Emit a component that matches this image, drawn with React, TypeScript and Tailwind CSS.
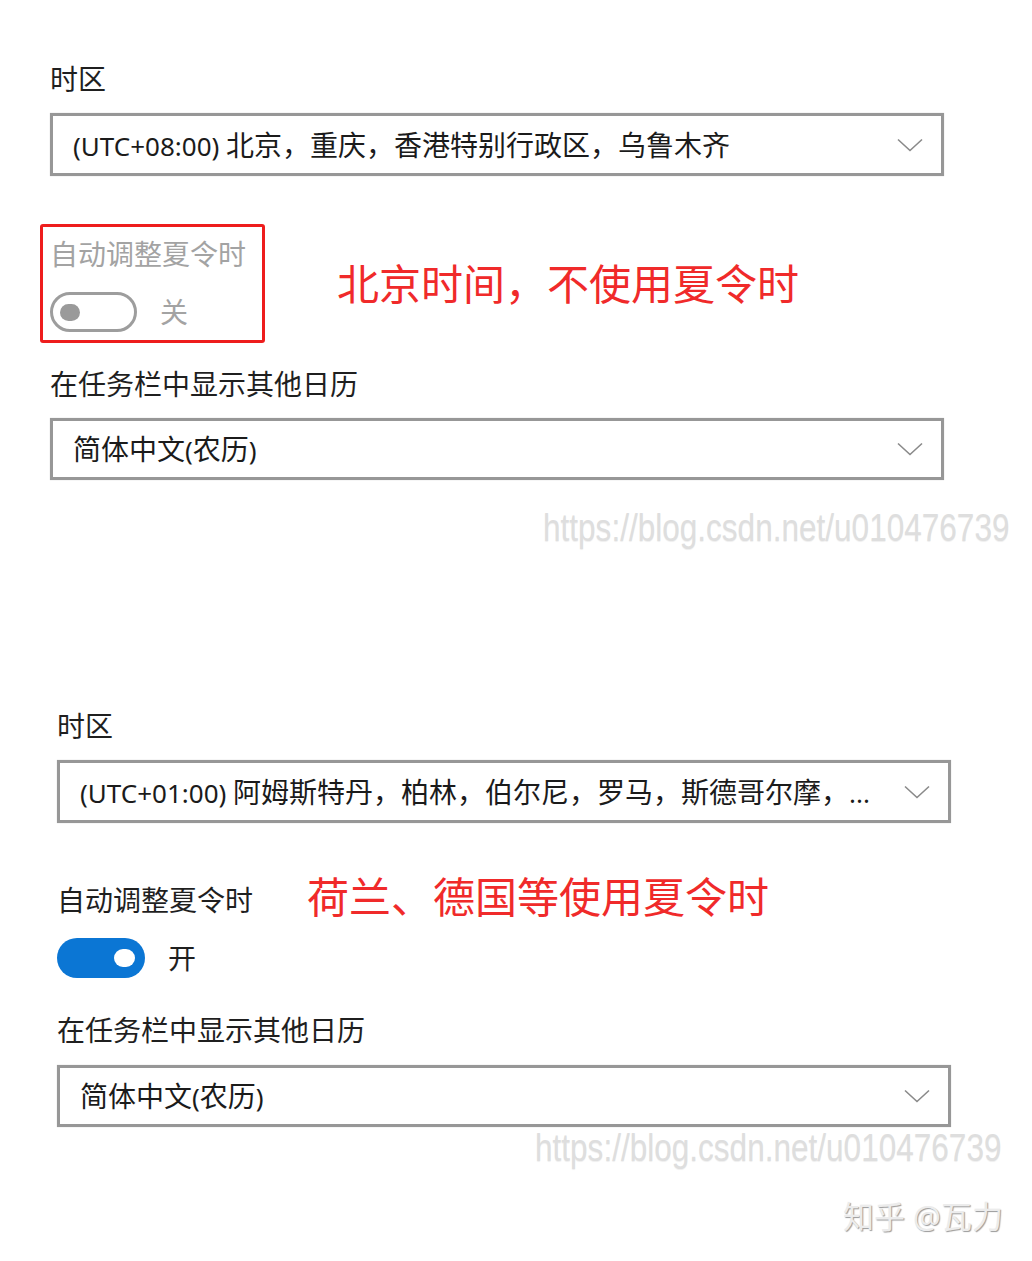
const cjk = "font-['Noto_Sans','Noto_Sans_CJK_SC',sans-serif]";

function Chevron() {
  return (
    <svg width="26" height="14" viewBox="0 0 26 14" fill="none" className="shrink-0">
      <polyline points="1,1.5 13,12.5 25,1.5" stroke="#8a8a8a" strokeWidth="1.6" />
    </svg>
  );
}

// ascii runs are drawn a little smaller, the source used Segoe UI for them
function MixedText({ text }: { text: string }) {
  const parts = text.split(/([\x20-\x7E]+)/).filter(Boolean);
  return (
    <>
      {parts.map((p, i) =>
        /^[\x20-\x7E]+$/.test(p) ? (
          <span key={i} className="text-[26px]">
            {p}
          </span>
        ) : (
          <span key={i}>{p}</span>
        )
      )}
    </>
  );
}

function Select({ text, h = "h-[63px]" }: { text: string; h?: string }) {
  return (
    <div
      className={`flex w-[894px] ${h} items-center justify-between border-[3px] border-[#979797] bg-white pl-[20px] pr-[18px] shadow-[0_0_1px_#c8c8c8]`}
    >
      <span className={`${cjk} whitespace-nowrap text-[28px] leading-none text-[#1b1b1b]`}>
        <MixedText text={text} />
      </span>
      <Chevron />
    </div>
  );
}

function Label({ children, muted = false }: { children: string; muted?: boolean }) {
  return (
    <div
      className={`${cjk} h-[36px] whitespace-nowrap text-[28px] leading-[36px] ${muted ? "text-[#a3a3a3]" : "text-[#1f1f1f]"}`}
    >
      {children}
    </div>
  );
}

function Watermark({ className }: { className: string }) {
  return (
    <div
      className={`h-[40px] origin-left scale-x-[0.83] whitespace-nowrap font-['Liberation_Sans',Arial,sans-serif] text-[38px] leading-[40px] text-[#dedede] [text-shadow:0_1px_1px_#efefef] ${className}`}
    >
      https://blog.csdn.net/u010476739
    </div>
  );
}

export default function App() {
  return (
    <div className="h-[1261px] w-[1032px] overflow-hidden bg-white">
      <div className="flex flex-col pl-[50px] pt-[61px]">
        <Label>时区</Label>
        <div className="mt-[16px]">
          <Select text="(UTC+08:00) 北京，重庆，香港特别行政区，乌鲁木齐" />
        </div>

        <div className="mt-[48px] flex items-center">
          <div className="-ml-[10px] flex h-[119px] w-[225px] flex-col rounded-[3px] border-[3px] border-[#ee1d1d] pl-[7px] pt-[9px]">
            <Label muted>自动调整夏令时</Label>
            <div className="mt-[20px] flex items-center">
              <div className="flex h-[40px] w-[87px] items-center rounded-full border-[3px] border-[#9d9d9d] pl-[7px]">
                <div className="h-[17px] w-[20px] rounded-full bg-[#9a9a9a]" />
              </div>
              <span className={`${cjk} ml-[23px] text-[28px] leading-none text-[#a3a3a3]`}>关</span>
            </div>
          </div>
          <div className={`${cjk} ml-[72px] whitespace-nowrap text-[42px] leading-none text-[#f02a2a]`}>
            北京时间，不使用夏令时
          </div>
        </div>

        <div className="mt-[23px]">
          <Label>在任务栏中显示其他日历</Label>
        </div>
        <div className="mt-[16px]">
          <Select text="简体中文(农历)" h="h-[62px]" />
        </div>
        <Watermark className="ml-[493px] mt-[28px]" />
      </div>

      <div className="flex flex-col pl-[57px]">
        <div className="mt-[160px]">
          <Label>时区</Label>
        </div>
        <div className="mt-[16px]">
          <Select text="(UTC+01:00) 阿姆斯特丹，柏林，伯尔尼，罗马，斯德哥尔摩，..." />
        </div>

        <div className="mt-[59px] flex items-center">
          <Label>自动调整夏令时</Label>
          <div className={`${cjk} ml-[54px] -mt-[6px] whitespace-nowrap text-[42px] leading-none text-[#f02a2a]`}>
            荷兰、德国等使用夏令时
          </div>
        </div>

        <div className="mt-[20px] flex items-center">
          <div className="flex h-[40px] w-[88px] items-center justify-end rounded-full bg-[#0b76d4] pr-[10px]">
            <div className="h-[18px] w-[21px] rounded-full bg-white" />
          </div>
          <span className={`${cjk} ml-[23px] text-[28px] leading-none text-[#1f1f1f]`}>开</span>
        </div>

        <div className="mt-[34px]">
          <Label>在任务栏中显示其他日历</Label>
        </div>
        <div className="mt-[17px]">
          <Select text="简体中文(农历)" h="h-[62px]" />
        </div>
        <Watermark className="ml-[478px] mt-[1px]" />

        <div
          className={`${cjk} ml-[786px] mt-[28px] h-[40px] whitespace-nowrap text-[31px] leading-[40px] text-[#ececec] [text-shadow:1px_1px_1px_#9a9a9a]`}
        >
          知乎 @瓦力
        </div>
      </div>
    </div>
  );
}
